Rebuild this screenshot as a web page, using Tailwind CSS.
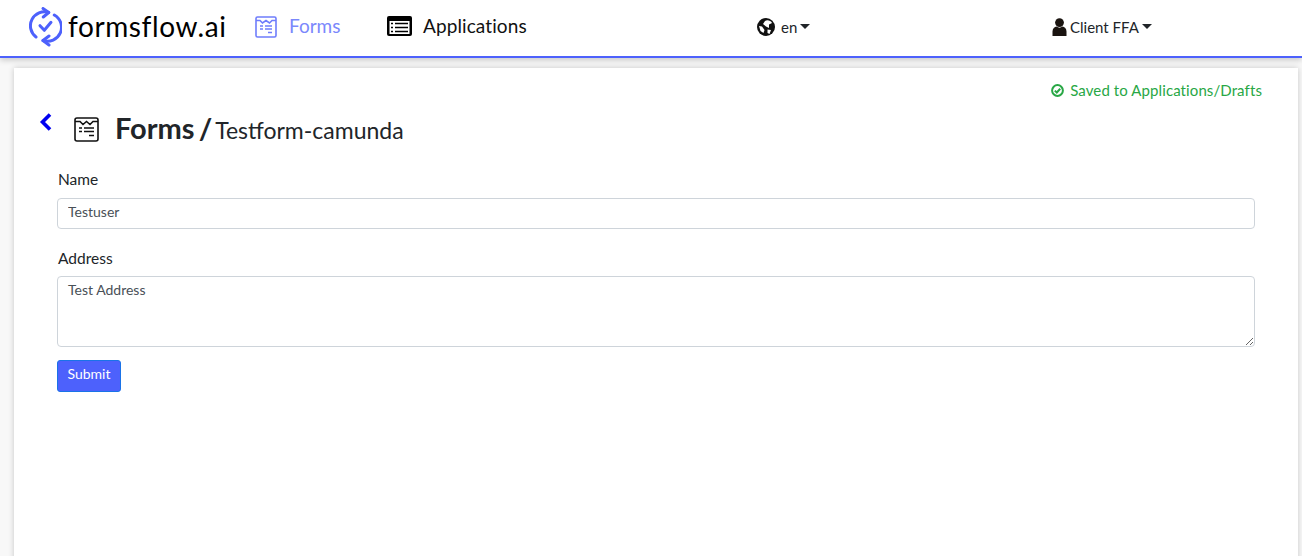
<!DOCTYPE html>
<html lang="en">
<head>
  <meta charset="UTF-8">
  <meta name="viewport" content="width=device-width, initial-scale=1.0">
  <script src="https://cdn.jsdelivr.net/npm/@tailwindcss/browser@4"></script>
  <title>Forms</title>
</head>
<body class="h-[556px] overflow-hidden bg-[#f8f8f8] font-['Lato','Noto_Sans',sans-serif] text-[#212529]">
  <!-- Header -->
  <nav class="relative z-10 flex h-[58px] items-center border-b-2 border-[#4d61fc] bg-white pb-[2px] shadow-[0_2px_6px_rgba(0,0,0,0.2)]">
    <a class="ml-[29px] flex w-[197px] items-center gap-[6px] text-[28px] tracking-[0.6px] text-black">
      <svg class="h-[40px] w-[33px] shrink-0" viewBox="0 0 33 40" fill="none" stroke="#4d61fc" stroke-width="3" stroke-linecap="round" stroke-linejoin="round">
        <path d="M7 30A14 14 0 0 1 19.7 5.5"/>
        <path d="M25.3 8A14 14 0 0 1 14 33.5"/>
        <path d="M14 1.5L19.7 5.5L14.3 10"/>
        <path d="M20 29L14 33.5L20 38"/>
        <path d="M11 18.7L15.3 23.3L22 15.3"/>
      </svg>
      <span class="mb-[2px]">formsflow.ai</span>
    </a>
    <a class="ml-[29px] flex w-[131px] items-center gap-[12px] text-[19px] text-[#7b88fc]">
      <svg class="h-[22px] w-[22px]" viewBox="0 0 22 22" fill="none" stroke="#6f7dfc" stroke-width="1.6">
        <rect x="1" y="1" width="20" height="20" rx="1.5"/>
        <path d="M1 4.5H5L7.5 7L11 4.5L14.5 7L17 4.5H21"/>
        <path d="M5 10H8M10 10H17M5 13H8M10 13H17M13 16.5H17"/>
      </svg>
      <span class="mb-[2px]">Forms</span>
    </a>
    <a class="ml-[1px] flex w-[370px] items-center gap-[11px] text-[19px] text-[#111]">
      <svg class="h-[24px] w-[25px]" viewBox="0 0 25 24" fill="none">
        <rect x="0" y="1" width="25" height="20" rx="2" fill="#000"/>
        <rect x="2.5" y="6" width="20" height="13" fill="#fff"/>
        <path d="M4 8.5H6M8 8.5H21M4 12.5H6M8 12.5H21M4 16.5H6M8 16.5H21" stroke="#000" stroke-width="1.6"/>
      </svg>
      <span class="mb-[2px] tracking-[0.1px]">Applications</span>
    </a>
    <a class="flex w-[295px] items-center text-[15px]">
      <svg class="mr-[6px] h-[18px] w-[18px]" viewBox="0 0 18 18">
        <circle cx="9" cy="9" r="9" fill="#111"/>
        <path d="M8 3C10 1.5 14 2.5 15 5L12 6.5L12 10L9 8.5L6 6ZM10.5 11.5L14 12L12.5 16L10.5 15Z" fill="#fff"/>
        <path d="M2 8L5 8.5L7.5 12L6.5 15L3.5 13Z" fill="#fff"/>
      </svg>
      <span>en</span>
      <span class="ml-[3px] mt-[-2px] border-x-[5px] border-t-[5px] border-x-transparent border-t-[#212529]"></span>
    </a>
    <a class="flex items-center text-[15px]">
      <svg class="mr-[3px] h-[18px] w-[15px]" viewBox="0 0 15 18" fill="#1a1410">
        <circle cx="7.5" cy="4.6" r="4.4"/>
        <path d="M0.5 18V13.5C0.5 10.5 2.5 9 4.5 8.6C6.5 10 8.5 10 10.5 8.6C12.5 9 14.5 10.5 14.5 13.5V18Z"/>
      </svg>
      <span>Client FFA</span>
      <span class="ml-[3px] mt-[-2px] border-x-[5px] border-t-[5px] border-x-transparent border-t-[#212529]"></span>
    </a>
  </nav>

  <!-- Card -->
  <main class="ml-[14px] mr-[4px] mt-[10px] h-[500px] bg-white pl-[23px] pr-[43px] shadow-[0_0_6px_rgba(0,0,0,0.2)]">
    <div class="-mr-[7px] flex h-[32px] items-center justify-end gap-[6px] pt-[12px] text-[15px] tracking-[0.1px] text-[#28a745]">
      <svg class="h-[13px] w-[13px]" viewBox="0 0 13 13" fill="none" stroke="#28a745" stroke-width="2">
        <circle cx="6.5" cy="6.5" r="5.4"/>
        <path d="M3.8 6.6L5.8 8.5L9.2 4.8"/>
      </svg>
      <span>Saved to Applications/Drafts</span>
    </div>

    <div class="mt-[10px] flex h-[38px] items-center">
      <svg class="mb-[14px] ml-[1px] h-[20px] w-[14px]" viewBox="0 0 14 20" fill="none" stroke="#0000f0" stroke-width="3.6">
        <path d="M12 2.5L4.5 10L12 17.5"/>
      </svg>
      <svg class="ml-[22px] h-[25px] w-[25px]" viewBox="0 0 25 25" fill="none" stroke="#111" stroke-width="1.6">
        <rect x="1" y="1" width="23" height="23" rx="2"/>
        <path d="M1 4.5H6L9 7.5L12.5 4.5L16 7.5L19 4.5H24"/>
        <path d="M5 11H8M10 11H20M5 14.5H8M10 14.5H20M15 18.5H20"/>
      </svg>
      <h1 class="mb-[2px] ml-[16px] flex items-baseline gap-[4px] text-[29px] font-bold">
        <span>Forms</span>
        <span>/</span>
        <span class="ml-[-1px] text-[23px] font-normal">Testform-camunda</span>
      </h1>
    </div>

    <form class="ml-[20px] mt-[20px]">
      <label class="block pl-[1px] text-[15.5px] leading-[22px]" for="name">Name</label>
      <input id="name" value="Testuser" class="mt-[8px] block h-[31px] w-full rounded-[4px] border border-[#ced4da] px-[10px] pb-[5px] text-[14px] text-[#495057]">
      <label class="mt-[18px] block pl-[1px] text-[15.5px] leading-[22px]" for="address">Address</label>
      <textarea id="address" class="mt-[7px] block h-[71px] w-full rounded-[4px] border border-[#ced4da] px-[10px] py-[5px] text-[14px] leading-[15px] text-[#495057]">Test Address</textarea>
      <button type="button" class="mt-[13px] h-[32px] w-[64px] rounded-[3px] border border-[#1a73e8] bg-[#4d61fc] pb-[5px] text-[14px] text-white">Submit</button>
    </form>
  </main>
</body>
</html>
